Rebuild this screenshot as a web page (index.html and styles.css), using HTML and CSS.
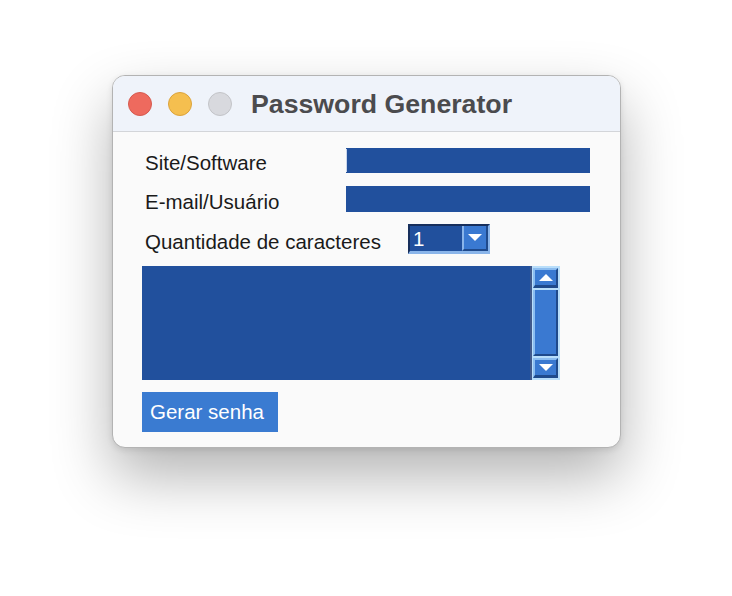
FILE: index.html
```html
<!DOCTYPE html>
<html>
<head>
<meta charset="utf-8">
<link rel="stylesheet" href="styles.css">
</head>
<body>
<div class="window">
  <div class="titlebar">
    <div class="lights">
      <span class="light red"></span>
      <span class="light yellow"></span>
      <span class="light gray"></span>
    </div>
    <div class="title">Password Generator</div>
  </div>
  <div class="content">
    <div class="row row1">
      <label class="label">Site/Software</label>
      <div class="field"><span class="caret"></span></div>
    </div>
    <div class="row row2">
      <label class="label">E-mail/Usuário</label>
      <div class="field"></div>
    </div>
    <div class="row row3">
      <label class="label label-wide">Quantidade de caracteres</label>
      <div class="combo">
        <span class="combo-value">1</span>
        <span class="combo-btn"><span class="tri-down"></span></span>
      </div>
    </div>
    <div class="area-row">
      <div class="textarea"></div>
      <div class="scrollbar">
        <div class="sb-btn"><span class="tri-up"></span></div>
        <div class="sb-track"></div>
        <div class="sb-btn"><span class="tri-down"></span></div>
      </div>
    </div>
    <div class="btn">Gerar senha</div>
  </div>
</div>
</body>
</html>
```
FILE: styles.css
```css
html, body {
  margin: 0;
  padding: 0;
  background: #ffffff;
}
body {
  width: 732px;
  height: 596px;
  overflow: hidden;
  font-family: "Liberation Sans", Arial, sans-serif;
}
.window {
  margin: 75px 0 0 112px;
  width: 509px;
  height: 373px;
  box-sizing: border-box;
  border-radius: 13px;
  background: #fafafa;
  border: 1px solid #b3b3b3;
  box-shadow: 0 28px 60px rgba(0, 0, 0, 0.30), 0 2px 6px rgba(0,0,0,0.10);
  overflow: hidden;
}
.titlebar {
  height: 55px;
  background: #eff3fa;
  border-bottom: 1px solid #d3d5d9;
  display: flex;
  align-items: center;
  padding-left: 15px;
}
.lights {
  display: flex;
  gap: 16px;
  margin-top: 1px;
}
.light {
  width: 22px;
  height: 22px;
  border-radius: 50%;
  display: block;
}
.red { background: #ee6a5e; border: 1px solid #d65a4f; }
.yellow { background: #f5bf4f; border: 1px solid #dca33b; }
.gray { background: #d8d9de; border: 1px solid #c3c4c8; }
.title {
  margin-left: 19px;
  font-weight: bold;
  font-size: 26.7px;
  color: #4b4b4e;
  margin-top: 1px;
}
.content {
  padding: 16px 0 0 29px;
  display: flex;
  flex-direction: column;
}
.row {
  display: flex;
  align-items: center;
  padding-left: 3px;
}
.row2 { margin-top: 13px; }
.row3 { margin-top: 12px; }
.label {
  width: 201px;
  font-size: 20.5px;
  line-height: 21px;
  color: #1a1a1a;
  padding-top: 4px;
}
.label-wide { width: 263px; }
.field {
  width: 244px;
  height: 25px;
  background: #21509d;
  position: relative;
}
.row2 .field { height: 26px; }
.caret {
  position: absolute;
  left: 0;
  top: 1px;
  bottom: 1px;
  width: 1px;
  background: #c9d6ec;
}
.combo {
  width: 82px;
  height: 30px;
  box-sizing: border-box;
  border-top: 2px solid #172f5c;
  border-left: 2px solid #172f5c;
  border-bottom: 3px solid #8ab5ea;
  border-right: 2px solid #8ab5ea;
  background: #21509d;
  display: flex;
  align-items: stretch;
}
.combo-value {
  flex: 1;
  color: #ffffff;
  font-size: 20.5px;
  line-height: 25px;
  padding-left: 3px;
}
.combo-btn {
  width: 26px;
  box-sizing: border-box;
  background: #3a79d1;
  border-left: 2px solid #8ab5ea;
  border-right: 2px solid #1f4a8c;
  border-bottom: 2px solid #1f4a8c;
  display: flex;
  align-items: center;
  justify-content: center;
}
.tri-down {
  width: 0;
  height: 0;
  border-left: 7px solid transparent;
  border-right: 7px solid transparent;
  border-top: 7px solid #ffffff;
}
.tri-up {
  width: 0;
  height: 0;
  border-left: 7px solid transparent;
  border-right: 7px solid transparent;
  border-bottom: 7px solid #ffffff;
}
.area-row {
  display: flex;
  margin-top: 12px;
}
.textarea {
  width: 388px;
  height: 114px;
  background: #21509d;
}
.scrollbar {
  width: 30px;
  height: 114px;
  box-sizing: border-box;
  background: #b9defa;
  border-left: 2px solid #40598c;
  padding: 2px 2px 2px 1px;
  display: flex;
  flex-direction: column;
  gap: 2px;
}
.sb-btn {
  height: 20px;
  box-sizing: border-box;
  background: #3a79d1;
  border-top: 2px solid #8cbdf0;
  border-left: 2px solid #8cbdf0;
  border-right: 2px solid #1f4a8c;
  border-bottom: 3px solid #1f4a8c;
  display: flex;
  align-items: center;
  justify-content: center;
}
.sb-track {
  flex: 1;
  box-sizing: border-box;
  background: #3a79d1;
  border-left: 2px solid #8cbdf0;
  border-right: 2px solid #1f4a8c;
  border-bottom: 2px solid #1f4a8c;
}
.btn {
  margin-top: 12px;
  width: 136px;
  height: 40px;
  background: #3a7bd1;
  color: #ffffff;
  font-size: 20.5px;
  line-height: 40px;
  padding-left: 8px;
  box-sizing: border-box;
}
```
